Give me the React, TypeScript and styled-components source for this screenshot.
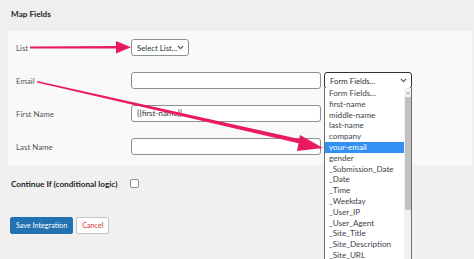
import React from 'react';
import styled, { createGlobalStyle } from 'styled-components';

const GlobalStyle = createGlobalStyle`
  html, body {
    margin: 0;
    padding: 0;
    background: #f0f0f1;
  }
  body {
    font-family: Lato, "Open Sans", sans-serif;
    color: #3c434a;
  }
`;

const Page = styled.div`
  position: relative;
  width: 474px;
  height: 259px;
  overflow: hidden;
  background: #f0f0f1;
`;

const Header = styled.div`
  height: 31px;
  box-sizing: border-box;
  padding: 9px 11px 0;
  font-size: 8.2px;
  font-weight: 700;
  color: #1d2327;
  background: #efeff0;
`;

const Panel = styled.div`
  margin: 0 2px 0 8px;
  padding: 8px 0 10px 8px;
  background: #f9f9f9;
  display: flex;
  flex-direction: column;
  gap: 16px;
`;

const Row = styled.div`
  display: flex;
  align-items: center;
  height: 17px;
`;

const Label = styled.div`
  width: 115px;
  flex-shrink: 0;
  font-size: 7.9px;
  color: #50575e;
`;

const Controls = styled.div`
  display: flex;
  gap: 3px;
`;

const TextInput = styled.div`
  box-sizing: border-box;
  width: 190px;
  height: 17px;
  border: 1px solid #8c8f94;
  border-radius: 3px;
  background: #fff;
  font-size: 8px;
  color: #2c3338;
  padding: 0 5px;
  line-height: 15px;
  white-space: nowrap;
`;

const Select = styled.div<{ $w: number; $focus?: boolean }>`
  box-sizing: border-box;
  width: ${(p) => p.$w}px;
  height: 17px;
  border: 1px solid ${(p) => (p.$focus ? '#2c3338' : '#8c8f94')};
  border-radius: 3px;
  background: #fff;
  font-size: 7.8px;
  color: #2c3338;
  padding: 0 4px 0 5px;
  display: flex;
  align-items: center;
  justify-content: space-between;
  white-space: nowrap;
  overflow: hidden;
`;

const Chevron = () => (
  <svg width="7" height="5" viewBox="0 0 7 5" style={{ flexShrink: 0 }}>
    <path d="M0.8 0.8 L3.5 3.6 L6.2 0.8" fill="none" stroke="#50575e" strokeWidth="1.1" />
  </svg>
);

const ConditionRow = styled.div`
  display: flex;
  align-items: center;
  padding: 13px 0 0 11px;
  height: 11px;
`;

const BoldLabel = styled.div`
  width: 119px;
  flex-shrink: 0;
  font-size: 8.2px;
  font-weight: 700;
  color: #1d2327;
  white-space: nowrap;
`;

const Checkbox = styled.div`
  box-sizing: border-box;
  width: 9px;
  height: 9px;
  border: 1px solid #8c8f94;
  border-radius: 2px;
  background: #fff;
`;

const Actions = styled.div`
  display: flex;
  gap: 3px;
  padding: 28px 0 0 10px;
`;

const Button = styled.div<{ $primary?: boolean }>`
  box-sizing: border-box;
  height: 17px;
  padding: 0 5px;
  border-radius: 2px;
  font-size: 7.2px;
  line-height: 15px;
  white-space: nowrap;
  border: 1px solid ${(p) => (p.$primary ? '#2271b1' : '#c3c4c7')};
  background: ${(p) => (p.$primary ? '#2271b1' : '#fff')};
  color: ${(p) => (p.$primary ? '#fff' : '#d63638')};
`;

const Dropdown = styled.div`
  position: absolute;
  left: 324px;
  top: 88px;
  width: 88px;
  height: 180px;
  box-sizing: border-box;
  border: 1px solid #6d6d6d;
  border-top: none;
  background: #fff;
  display: flex;
`;

const Options = styled.div`
  flex: 1;
`;

const Option = styled.div<{ $active?: boolean }>`
  height: 10.8px;
  line-height: 10.8px;
  font-size: 8.1px;
  padding-left: 4px;
  white-space: nowrap;
  color: ${(p) => (p.$active ? '#fff' : '#3c434a')};
  background: ${(p) => (p.$active ? '#3390f5' : 'transparent')};
`;

const Scrollbar = styled.div`
  width: 7px;
  background: #f1f1f1;
  display: flex;
  flex-direction: column;
  align-items: center;
`;

const ScrollArrow = styled.div`
  width: 0;
  height: 0;
  margin: 4px 0 3px;
  border-left: 2px solid transparent;
  border-right: 2px solid transparent;
  border-bottom: 2px solid #a3a3a3;
`;

const Thumb = styled.div`
  width: 6px;
  height: 113px;
  background: #c1c1c1;
`;

const Arrows = styled.svg`
  position: absolute;
  left: 0;
  top: 0;
  pointer-events: none;
`;

const options = [
  'Form Fields...',
  'first-name',
  'middle-name',
  'last-name',
  'company',
  'your-email',
  'gender',
  '_Submission_Date',
  '_Date',
  '_Time',
  '_Weekday',
  '_User_IP',
  '_User_Agent',
  '_Site_Title',
  '_Site_Description',
  '_Site_URL',
];

export default function App() {
  return (
    <Page>
      <GlobalStyle />
      <Header>Map Fields</Header>
      <Panel>
        <Row>
          <Label>List</Label>
          <Select $w={58}>
            Select List... <Chevron />
          </Select>
        </Row>
        <Row>
          <Label>Email</Label>
          <Controls>
            <TextInput />
            <Select $w={88} $focus>
              Form Fields... <Chevron />
            </Select>
          </Controls>
        </Row>
        <Row>
          <Label>First Name</Label>
          <TextInput>{'{{first-name}}'}</TextInput>
        </Row>
        <Row>
          <Label>Last Name</Label>
          <TextInput />
        </Row>
      </Panel>
      <ConditionRow>
        <BoldLabel>Continue If (conditional logic)</BoldLabel>
        <Checkbox />
      </ConditionRow>
      <Actions>
        <Button $primary>Save Integration</Button>
        <Button>Cancel</Button>
      </Actions>
      <Dropdown>
        <Options>
          {options.map((o) => (
            <Option key={o} $active={o === 'your-email'}>
              {o}
            </Option>
          ))}
        </Options>
        <Scrollbar>
          <ScrollArrow />
          <Thumb />
        </Scrollbar>
      </Dropdown>
      <Arrows width="474" height="259" viewBox="0 0 474 259">
        <path d="M30 46.6 L118 46 L118 48.6 L30 48.4 Z" fill="#ea1a5c" />
        <path d="M116 41 L131 47.2 L116 53.5 Z" fill="#ea1a5c" />
        <path d="M37 81 L306 140.5 L305 144.8 L37 82.4 Z" fill="#ea1a5c" />
        <path d="M300 135 L323 148 L297 151 Z" fill="#ea1a5c" />
      </Arrows>
    </Page>
  );
}
